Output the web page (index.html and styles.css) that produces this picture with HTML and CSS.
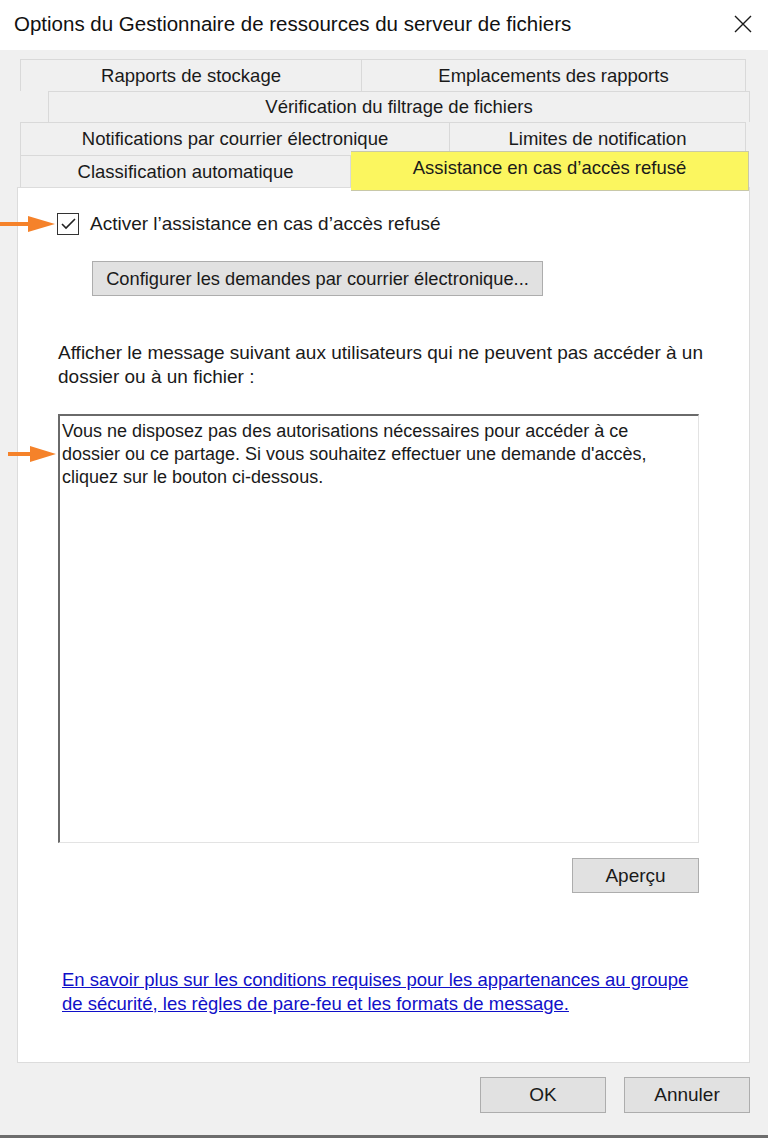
FILE: index.html
```html
<!DOCTYPE html>
<html lang="fr">
<head>
    <meta charset="UTF-8">
    <meta name="viewport" content="width=device-width, initial-scale=1.0">
    <title>Options du Gestionnaire de ressources du serveur de fichiers</title>
    <link rel="stylesheet" href="styles.css">
</head>
<body>
    <div class="titlebar">
        <span class="title">Options du Gestionnaire de ressources du serveur de fichiers</span>
        <svg class="close" width="18" height="18" viewBox="0 0 18 18">
            <path d="M1 1 L17 17 M17 1 L1 17" stroke="#1a1a1a" stroke-width="1.4" fill="none"/>
        </svg>
    </div>

    <div class="dialog">
        <div class="tabs">
            <div class="tab-row row-1">
                <div class="tab w-stock">Rapports de stockage</div>
                <div class="tab w-empl">Emplacements des rapports</div>
            </div>
            <div class="tab-row row-2">
                <div class="tab w-verif">Vérification du filtrage de fichiers</div>
            </div>
            <div class="tab-row row-3">
                <div class="tab w-notif">Notifications par courrier électronique</div>
                <div class="tab w-limit">Limites de notification</div>
            </div>
            <div class="tab-row row-4">
                <div class="tab w-class">Classification automatique</div>
                <div class="tab tab-active w-assist">Assistance en cas d’accès refusé</div>
            </div>
        </div>

        <div class="panel">
            <div class="check-row">
                <span class="checkbox">
                    <svg width="15" height="12" viewBox="0 0 15 12">
                        <path d="M1 6 L5 10 L14 1" stroke="#222" stroke-width="1.6" fill="none"/>
                    </svg>
                </span>
                <span class="check-label">Activer l’assistance en cas d’accès refusé</span>
            </div>

            <button class="btn btn-config">Configurer les demandes par courrier électronique...</button>

            <p class="intro">Afficher le message suivant aux utilisateurs qui ne peuvent pas accéder à un dossier ou à un fichier :</p>

            <div class="message">Vous ne disposez pas des autorisations nécessaires pour accéder à ce dossier ou ce partage. Si vous souhaitez effectuer une demande d'accès, cliquez sur le bouton ci-dessous.</div>

            <div class="preview-row">
                <button class="btn btn-preview">Aperçu</button>
            </div>

            <a class="help-link" href="#">En savoir plus sur les conditions requises pour les appartenances au groupe de sécurité, les règles de pare-feu et les formats de message.</a>
        </div>

        <div class="footer">
            <button class="btn btn-footer">OK</button>
            <button class="btn btn-footer">Annuler</button>
        </div>
    </div>

    <div class="bottom-line"></div>

    <!-- annotation arrows -->
    <svg class="arrow arrow-1" width="56" height="20" viewBox="0 0 56 20">
        <path d="M0 10 L32 10" stroke="#f5822a" stroke-width="4"/>
        <path d="M28 2 L55 10 L28 18 Z" fill="#f5822a"/>
    </svg>
    <svg class="arrow arrow-2" width="48" height="20" viewBox="0 0 48 20">
        <path d="M0 10 L26 10" stroke="#f5822a" stroke-width="4"/>
        <path d="M22 2 L48 10 L22 18 Z" fill="#f5822a"/>
    </svg>
</body>
</html>
```

FILE: styles.css
```css
body {
    margin: 0;
    background: #f0f0f0;
    font-family: 'Liberation Sans', Arial, sans-serif;
    font-size: 19px;
    color: #1a1a1a;
    width: 768px;
    height: 1138px;
    position: relative;
    overflow: hidden;
}

.titlebar {
    height: 50px;
    background: #ffffff;
    display: flex;
    align-items: center;
    justify-content: space-between;
    padding: 0 16px 0 14px;
}

.title {
    font-size: 20.5px;
    color: #111;
    margin-top: -2px;
}

.close {
    margin-top: -2px;
}

.dialog {
    padding-top: 9px;
}

.tabs {
    display: flex;
    flex-direction: column;
    font-size: 18.5px;
}

.tab-row {
    display: flex;
}

.tab {
    box-sizing: border-box;
    border: 1px solid #d9d9d9;
    border-bottom: none;
    background: #f0f0f0;
    display: flex;
    align-items: center;
    justify-content: center;
    color: #1a1a1a;
    white-space: nowrap;
}

.tab + .tab {
    border-left: none;
}

.row-1 { padding-left: 20px; height: 32px; }
.row-2 { padding-left: 48px; height: 31px; }
.row-3 { padding-left: 20px; height: 33px; }
.row-4 { padding-left: 20px; height: 32px; }

.w-stock { width: 342px; }
.w-empl { width: 384px; }
.w-verif { width: 702px; }
.w-notif { width: 430px; }
.w-limit { width: 296px; }
.w-class { width: 331px; }

.w-assist { width: 398px; }

.tab-active {
    position: relative;
    z-index: 2;
    margin-top: -4px;
    height: 40px;
    background: #fbf65f;
    border: 1px solid #c8c8a8;
    padding-bottom: 6px;
}

.panel {
    box-sizing: border-box;
    margin-left: 17px;
    width: 733px;
    height: 876px;
    background: #ffffff;
    border: 1px solid #dcdcdc;
    padding: 25px 0 0 39px;
    display: flex;
    flex-direction: column;
    align-items: flex-start;
}

.check-row {
    display: flex;
    align-items: center;
    height: 22px;
}

.checkbox {
    box-sizing: border-box;
    width: 22px;
    height: 22px;
    border: 1px solid #333;
    background: #fff;
    display: flex;
    align-items: center;
    justify-content: center;
}

.check-label {
    margin-left: 11px;
}

.btn {
    font-family: 'Liberation Sans', Arial, sans-serif;
    font-size: 19px;
    color: #1a1a1a;
    background: #e1e1e1;
    border: 1px solid #adadad;
    padding: 0;
    box-sizing: border-box;
}

.btn-config {
    margin: 26px 0 0 35px;
    width: 451px;
    height: 35px;
    font-size: 18.3px;
}

.intro {
    margin: 45px 0 0 1px;
    width: 660px;
    line-height: 24px;
}

.message {
    box-sizing: border-box;
    margin: 25px 0 0 1px;
    width: 641px;
    height: 429px;
    border-top: 2px solid #6a6a6a;
    border-left: 2px solid #6a6a6a;
    border-right: 1px solid #e3e3e3;
    border-bottom: 1px solid #e3e3e3;
    padding: 4px 32px 0 2px;
    font-size: 18px;
    line-height: 23px;
}

.preview-row {
    width: 642px;
    display: flex;
    justify-content: flex-end;
    margin-top: 15px;
}

.btn-preview {
    width: 127px;
    height: 35px;
}

.help-link {
    margin: 75px 0 0 5px;
    width: 650px;
    font-size: 18.5px;
    line-height: 23.5px;
    color: #1010c8;
    text-decoration: underline;
}

.footer {
    display: flex;
    justify-content: flex-end;
    gap: 18px;
    padding: 14px 18px 0 0;
}

.btn-footer {
    width: 126px;
    height: 36px;
}

.bottom-line {
    position: absolute;
    left: 0;
    right: 0;
    bottom: 0;
    height: 3px;
    background: #6d6d6d;
}

.arrow {
    position: absolute;
}

.arrow-1 {
    left: 0;
    top: 214px;
}

.arrow-2 {
    left: 8px;
    top: 444px;
}
```
